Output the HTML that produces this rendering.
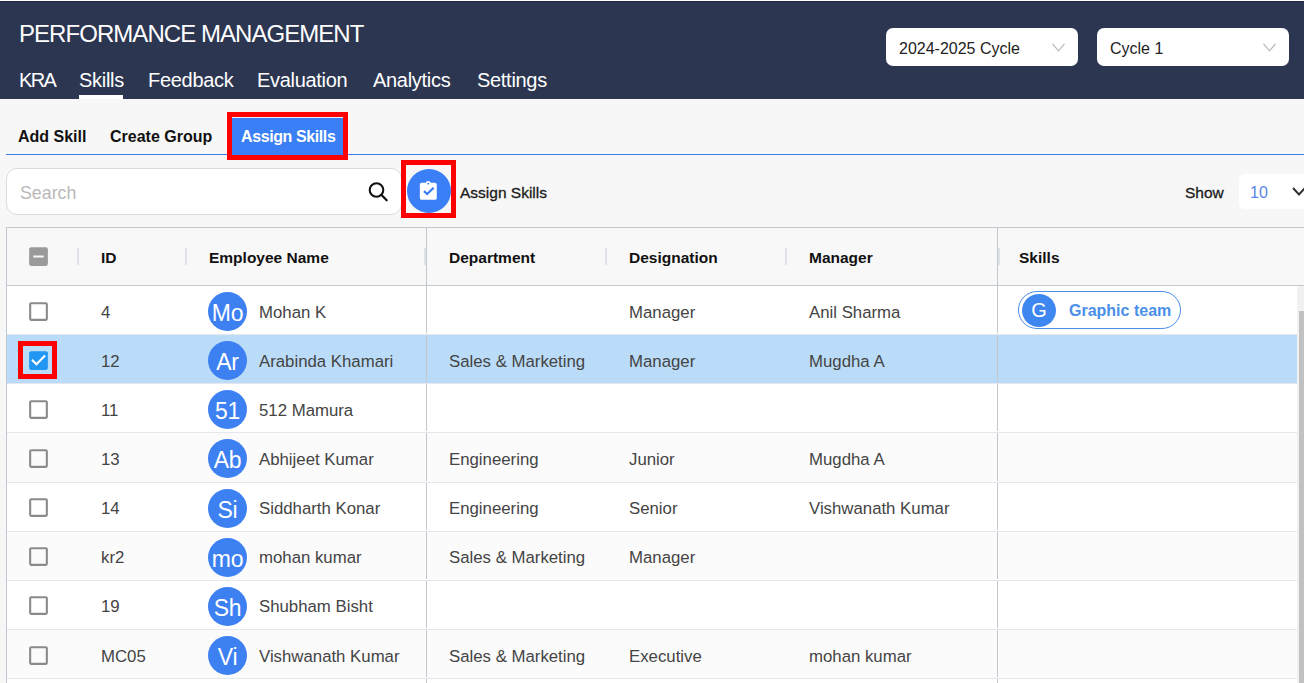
<!DOCTYPE html>
<html><head><meta charset="utf-8">
<style>
*{box-sizing:border-box;margin:0;padding:0}
html,body{width:1304px;height:683px;overflow:hidden;background:#f7f7f7;font-family:"Liberation Sans",sans-serif;position:relative}
.abs{position:absolute;white-space:nowrap}
#topline{position:absolute;left:0;top:0;width:1304px;height:1px;background:#fff}
#hdr{position:absolute;left:0;top:1px;width:1304px;height:98px;background:#2c3651}
#hdr1{position:absolute;left:0;top:1px;width:1304px;height:1px;background:#1f2845}
.title{position:absolute;left:19px;top:22px;font-size:24px;line-height:24px;color:#fff;letter-spacing:-0.95px;white-space:nowrap}
.nav{position:absolute;top:70px;font-size:20px;line-height:20px;color:#fff;white-space:nowrap;letter-spacing:-0.3px}
.uline{position:absolute;left:79px;top:95px;width:44px;height:4px;background:#fff}
.dd{position:absolute;top:28px;width:192px;height:38px;background:#fff;border-radius:7px}
.ddt{position:absolute;left:13px;top:12.7px;font-size:16px;line-height:16px;color:#222;white-space:nowrap}
.chev{position:absolute;top:15px;width:13px;height:9px}
.sub{position:absolute;top:129px;font-size:16px;line-height:16px;font-weight:700;color:#111;white-space:nowrap}
.tabline{position:absolute;left:6px;top:154px;width:1298px;height:1px;background:#3d7ef0}
.assignbtn{position:absolute;left:230px;top:117px;width:114px;height:38px;background:#3a7ff5;border-top:1px solid #e8eefc}
.redbox{position:absolute;border:5px solid #ff0000}
.search{position:absolute;left:6px;top:168px;width:396px;height:47px;background:#fff;border:1px solid #dcdcdc;border-radius:11px}
.ph{position:absolute;left:13px;top:16px;font-size:17.8px;line-height:17.5px;color:#b9b9b9;white-space:nowrap}
.fab{position:absolute;left:407px;top:169px;width:44px;height:44px;border-radius:50%;background:#3a7ff5}
.lbl{position:absolute;top:185px;font-size:15.5px;line-height:15px;color:#1a1a1a;-webkit-text-stroke:0.3px #1a1a1a;white-space:nowrap}
.showbox{position:absolute;left:1239px;top:174px;width:80px;height:35px;background:#fff;border-radius:6px}
.table{position:absolute;left:6px;top:227px;width:1310px;height:470px;border:1px solid #c3c7cf;background:#fff}
.thead{position:absolute;left:7px;top:228px;width:1297px;height:59px;background:#f8f8f8;border-bottom:2px solid #c6cad1}
.sep{position:absolute;top:248px;width:2px;height:17px;background:#dfe2e8}
.th{position:absolute;top:250px;font-size:15.5px;line-height:15.5px;font-weight:700;color:#111;white-space:nowrap}
.vline{position:absolute;top:228px;width:1px;height:455px;background:#c3c7cf}
.row{position:absolute;left:7px;width:1290px;height:49.16px;background:#fff;border-bottom:1px solid #e6e7ee}
.row.alt{background:#fbfbfb}
.rv{position:absolute;top:0;width:1px;height:calc(100% - 1px);background:#c3c7cf}
.row.sel{background:#bbdcf8}
.t{position:absolute;top:18.5px;font-size:16.8px;line-height:16px;color:#444;white-space:nowrap}
.cb{position:absolute;left:22px;top:16px;width:19px;height:19px;border:2px solid #8a8a8a;border-radius:2px}
.cb.checked{border:none;background:#2196f3;width:19px;height:19px;left:22px;top:16px}
.cbs{position:absolute;left:18.5px;top:12.5px}
.av{position:absolute;left:201px;top:6px;width:39px;height:39px;border-radius:50%;background:#3d80f2;color:#fff;font-size:23px;line-height:42px;text-align:center;letter-spacing:-0.3px}
.chip{position:absolute;left:1011px;top:5px;width:163px;height:38px;border:1px solid #4a8fe8;border-radius:19px;background:#fff}
.chipav{position:absolute;left:3px;top:2px;width:34px;height:33px;border-radius:50%;background:#3f87f0;color:#fff;font-size:20px;line-height:33px;text-align:center}
.chiptx{position:absolute;left:50px;top:11px;font-size:16px;line-height:16px;font-weight:700;color:#4a8fe8;white-space:nowrap}
.sbtrack{position:absolute;left:1297px;top:286px;width:7px;height:397px;background:#f1f1f1}
.sbthumb{position:absolute;left:1299px;top:311px;width:5px;height:372px;background:#c1c1c1}
</style></head><body>
<div id="topline"></div>
<div id="hdr"></div>
<div id="hdr1"></div>
<div class="title">PERFORMANCE MANAGEMENT</div>
<div class="nav" style="left:19px;letter-spacing:-1.6px">KRA</div>
<div class="nav" style="left:79px">Skills</div>
<div class="nav" style="left:148px">Feedback</div>
<div class="nav" style="left:257px">Evaluation</div>
<div class="nav" style="left:373px">Analytics</div>
<div class="nav" style="left:477px">Settings</div>
<div class="uline"></div>
<div class="dd" style="left:886px"><div class="ddt">2024-2025 Cycle</div>
<svg class="chev" style="left:166px" viewBox="0 0 13 9"><path d="M0.5 0.8 L6.5 7.8 L12.5 0.8" fill="none" stroke="#b8b8b8" stroke-width="1.2"/></svg></div>
<div class="dd" style="left:1097px"><div class="ddt">Cycle 1</div>
<svg class="chev" style="left:166px" viewBox="0 0 13 9"><path d="M0.5 0.8 L6.5 7.8 L12.5 0.8" fill="none" stroke="#b8b8b8" stroke-width="1.2"/></svg></div>

<div class="sub" style="left:18px">Add Skill</div>
<div class="sub" style="left:110px">Create Group</div>
<div class="tabline"></div>
<div class="assignbtn"></div>
<div class="sub" style="left:241px;color:#fff;letter-spacing:-0.4px">Assign Skills</div>
<div class="redbox" style="left:227px;top:112px;width:121px;height:48px"></div>

<div class="search"><div class="ph">Search</div>
<svg style="position:absolute;left:358.8px;top:10.6px" width="24" height="24" viewBox="0 0 24 24"><circle cx="10.5" cy="10" r="6.8" fill="none" stroke="#111" stroke-width="2.1"/><path d="M15.3 14.8 L20.7 20.3" stroke="#111" stroke-width="2.2" stroke-linecap="round"/></svg>
</div>
<div class="fab"></div>
<svg style="position:absolute;left:417.2px;top:180px" width="22.6" height="22.6" viewBox="0 0 24 24"><path fill="#fff" d="M19 3h-4.18C14.4 1.84 13.3 1 12 1c-1.3 0-2.4.84-2.82 2H5c-1.1 0-2 .9-2 2v14c0 1.1.9 2 2 2h14c1.1 0 2-.9 2-2V5c0-1.1-.9-2-2-2zm-7 0c.55 0 1 .45 1 1s-.45 1-1 1-1-.45-1-1 .45-1 1-1z"/><path d="M8.3 12.6 L10.8 14.9 L16.8 9" fill="none" stroke="#3a7ff5" stroke-width="2.4" stroke-linecap="square"/></svg>
<div class="redbox" style="left:401px;top:160px;width:55px;height:58px"></div>
<div class="lbl" style="left:460px">Assign Skills</div>
<div class="lbl" style="left:1185px">Show</div>
<div class="showbox"><div style="position:absolute;left:11px;top:11px;font-size:16px;line-height:16px;color:#5a84ec">10</div>
<svg style="position:absolute;left:53px;top:13px" width="14" height="9" viewBox="0 0 14 9"><path d="M1 1 L7 7.5 L13 1" fill="none" stroke="#333" stroke-width="2"/></svg></div>

<div class="table"></div>
<div class="thead"></div>
<svg style="position:absolute;left:25.5px;top:244px" width="25" height="25" viewBox="0 0 24 24"><path fill="#9a9a9a" d="M19 3H5c-1.1 0-2 .9-2 2v14c0 1.1.9 2 2 2h14c1.1 0 2-.9 2-2V5c0-1.1-.9-2-2-2zm-2 10H7v-2h10v2z"/></svg>
<div class="sep" style="left:77px"></div>
<div class="th" style="left:101px">ID</div>
<div class="sep" style="left:185px"></div>
<div class="th" style="left:209px">Employee Name</div>
<div class="sep" style="left:424px"></div>
<div class="th" style="left:449px">Department</div>
<div class="sep" style="left:605px"></div>
<div class="th" style="left:629px">Designation</div>
<div class="sep" style="left:785px"></div>
<div class="th" style="left:809px">Manager</div>
<div class="sep" style="left:998px"></div>
<div class="th" style="left:1019px">Skills</div>
<div class="row" style="top:286.0px"><svg class="cbs" width="25" height="25" viewBox="0 0 24 24"><path fill="#8a8a8a" d="M19 5v14H5V5h14m0-2H5c-1.1 0-2 .9-2 2v14c0 1.1.9 2 2 2h14c1.1 0 2-.9 2-2V5c0-1.1-.9-2-2-2z"/></svg><div class="t" style="left:94px">4</div><div class="av">Mo</div><div class="t" style="left:252px">Mohan K</div><div class="t" style="left:622px">Manager</div><div class="t" style="left:802px">Anil Sharma</div><div class="chip"><div class="chipav">G</div><div class="chiptx">Graphic team</div></div><div class="rv" style="left:419px"></div><div class="rv" style="left:990px"></div></div>
<div class="row sel" style="top:335.16px"><svg class="cbs" width="25" height="25" viewBox="0 0 24 24"><path fill="#2196f3" d="M19 3H5c-1.11 0-2 .9-2 2v14c0 1.1.89 2 2 2h14c1.11 0 2-.9 2-2V5c0-1.1-.89-2-2-2z"/><path fill="#fff" d="M10 17l-5-5 1.41-1.41L10 14.17l7.59-7.59L19 8l-9 9z"/></svg><div class="t" style="left:94px">12</div><div class="av">Ar</div><div class="t" style="left:252px">Arabinda Khamari</div><div class="t" style="left:442px">Sales &amp; Marketing</div><div class="t" style="left:622px">Manager</div><div class="t" style="left:802px">Mugdha A</div><div class="rv" style="left:419px"></div><div class="rv" style="left:990px"></div></div>
<div class="row" style="top:384.32px"><svg class="cbs" width="25" height="25" viewBox="0 0 24 24"><path fill="#8a8a8a" d="M19 5v14H5V5h14m0-2H5c-1.1 0-2 .9-2 2v14c0 1.1.9 2 2 2h14c1.1 0 2-.9 2-2V5c0-1.1-.9-2-2-2z"/></svg><div class="t" style="left:94px">11</div><div class="av">51</div><div class="t" style="left:252px">512 Mamura</div><div class="rv" style="left:419px"></div><div class="rv" style="left:990px"></div></div>
<div class="row alt" style="top:433.48px"><svg class="cbs" width="25" height="25" viewBox="0 0 24 24"><path fill="#8a8a8a" d="M19 5v14H5V5h14m0-2H5c-1.1 0-2 .9-2 2v14c0 1.1.9 2 2 2h14c1.1 0 2-.9 2-2V5c0-1.1-.9-2-2-2z"/></svg><div class="t" style="left:94px">13</div><div class="av">Ab</div><div class="t" style="left:252px">Abhijeet Kumar</div><div class="t" style="left:442px">Engineering</div><div class="t" style="left:622px">Junior</div><div class="t" style="left:802px">Mugdha A</div><div class="rv" style="left:419px"></div><div class="rv" style="left:990px"></div></div>
<div class="row" style="top:482.64px"><svg class="cbs" width="25" height="25" viewBox="0 0 24 24"><path fill="#8a8a8a" d="M19 5v14H5V5h14m0-2H5c-1.1 0-2 .9-2 2v14c0 1.1.9 2 2 2h14c1.1 0 2-.9 2-2V5c0-1.1-.9-2-2-2z"/></svg><div class="t" style="left:94px">14</div><div class="av">Si</div><div class="t" style="left:252px">Siddharth Konar</div><div class="t" style="left:442px">Engineering</div><div class="t" style="left:622px">Senior</div><div class="t" style="left:802px">Vishwanath Kumar</div><div class="rv" style="left:419px"></div><div class="rv" style="left:990px"></div></div>
<div class="row alt" style="top:531.8px"><svg class="cbs" width="25" height="25" viewBox="0 0 24 24"><path fill="#8a8a8a" d="M19 5v14H5V5h14m0-2H5c-1.1 0-2 .9-2 2v14c0 1.1.9 2 2 2h14c1.1 0 2-.9 2-2V5c0-1.1-.9-2-2-2z"/></svg><div class="t" style="left:94px">kr2</div><div class="av">mo</div><div class="t" style="left:252px">mohan kumar</div><div class="t" style="left:442px">Sales &amp; Marketing</div><div class="t" style="left:622px">Manager</div><div class="rv" style="left:419px"></div><div class="rv" style="left:990px"></div></div>
<div class="row" style="top:580.96px"><svg class="cbs" width="25" height="25" viewBox="0 0 24 24"><path fill="#8a8a8a" d="M19 5v14H5V5h14m0-2H5c-1.1 0-2 .9-2 2v14c0 1.1.9 2 2 2h14c1.1 0 2-.9 2-2V5c0-1.1-.9-2-2-2z"/></svg><div class="t" style="left:94px">19</div><div class="av">Sh</div><div class="t" style="left:252px">Shubham Bisht</div><div class="rv" style="left:419px"></div><div class="rv" style="left:990px"></div></div>
<div class="row alt" style="top:630.12px"><svg class="cbs" width="25" height="25" viewBox="0 0 24 24"><path fill="#8a8a8a" d="M19 5v14H5V5h14m0-2H5c-1.1 0-2 .9-2 2v14c0 1.1.9 2 2 2h14c1.1 0 2-.9 2-2V5c0-1.1-.9-2-2-2z"/></svg><div class="t" style="left:94px">MC05</div><div class="av">Vi</div><div class="t" style="left:252px">Vishwanath Kumar</div><div class="t" style="left:442px">Sales &amp; Marketing</div><div class="t" style="left:622px">Executive</div><div class="t" style="left:802px">mohan kumar</div><div class="rv" style="left:419px"></div><div class="rv" style="left:990px"></div></div>
<div class="row" style="top:679.28px"><div class="rv" style="left:419px"></div><div class="rv" style="left:990px"></div></div>
<div class="vline" style="left:426px;top:228px;height:58px"></div>
<div class="vline" style="left:997px;top:228px;height:58px"></div>
<div class="redbox" style="left:18px;top:341px;width:39px;height:38px"></div>
<div class="sbtrack"></div>
<div class="sbthumb"></div>
</body></html>
